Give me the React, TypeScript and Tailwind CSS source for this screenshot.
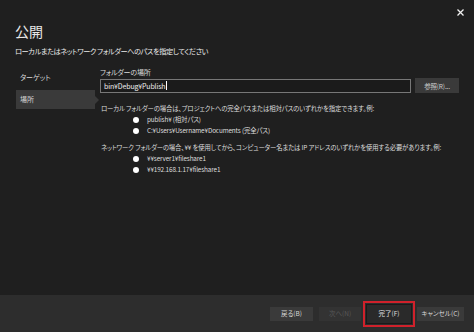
import React from "react";

const font = {
  fontFamily: '"Noto Sans CJK JP", "Noto Sans", sans-serif',
  fontFeatureSettings: '"palt"',
};

function Bullet({ children }: { children: React.ReactNode }) {
  return (
    <li className="flex items-center h-[11px]">
      <span className="ml-[33px] w-[6px] h-[6px] rounded-full bg-white" />
      <span className="ml-[8px]">{children}</span>
    </li>
  );
}

export default function App() {
  return (
    <div
      className="w-[474px] h-[332px] bg-[#1f1f1f] text-[#dcdcdc] flex flex-col overflow-hidden relative"
      style={font}
    >
      <button className="absolute right-[8px] top-[6px] w-[12px] h-[12px] flex items-center justify-center text-white">
        <svg width="7" height="7" viewBox="0 0 7 7">
          <path d="M0.5 0.5 L6.5 6.5 M6.5 0.5 L0.5 6.5" stroke="#f0f0f0" strokeWidth="1.3" />
        </svg>
      </button>

      <div className="flex-1 flex flex-col">
        <div className="pl-[15px] pt-[22px]">
          <h1 className="text-[14px] leading-[18px] text-[#e8e8e8] font-normal">公開</h1>
          <p className="mt-[6px] text-[7.2px] leading-[11px] tracking-[-0.4px] text-[#ececec]">
            ローカルまたはネットワーク フォルダーへのパスを指定してください
          </p>
        </div>

        <div className="flex mt-[12px]">
          <nav className="w-[100px] pl-[16px] pt-[1px] text-[7px] flex flex-col">
            <div className="h-[14px] pl-[4px] flex items-center text-[#d8d8d8]">ターゲット</div>
            <div className="relative mt-[6px] h-[19px] w-[79px] bg-[#3a3a3a] pl-[4px] flex items-center text-[#d8d8d8]">
              場所
              <span className="absolute right-[-4px] top-[6px] w-0 h-0 border-y-[4px] border-y-transparent border-l-[4px] border-l-[#3a3a3a]" />
            </div>
          </nav>

          <div className="flex-1 text-[6.4px] leading-[10px] tracking-[-0.15px] text-[#dcdcdc]">
            <div className="text-[7px] leading-[10px] mt-[-2px]">フォルダーの場所</div>
            <div className="flex items-center mt-[1px]">
              <div className="w-[311px] h-[14px] border border-[#777] bg-[#1b1b1b] flex items-center pl-[3px] text-[7px] text-[#eee]">
                bin¥Debug¥Publish
                <span className="ml-[1px] w-[1px] h-[9px] bg-white" />
              </div>
              <button className="ml-[4px] w-[44px] h-[15px] bg-[#3a3a3a] text-[6.5px] text-[#cfcfcf] flex items-center justify-center">
                参照(R)...
              </button>
            </div>

            <p className="mt-[11px] pl-[1px]">
              ローカル フォルダーの場合は、プロジェクトへの完全パスまたは相対パスのいずれかを指定できます。例:
            </p>
            <ul>
              <Bullet>publish¥ (相対パス)</Bullet>
              <Bullet>C:¥Users¥Username¥Documents (完全パス)</Bullet>
            </ul>

            <p className="mt-[7px] pl-[1px]">
              ネットワーク フォルダーの場合、¥¥ を使用してから、コンピューター名または IP アドレスのいずれかを使用する必要があります。例:
            </p>
            <ul>
              <Bullet>¥¥server1¥fileshare1</Bullet>
              <Bullet>¥¥192.168.1.17¥fileshare1</Bullet>
            </ul>
          </div>
        </div>
      </div>

      <footer className="h-[37px] bg-[#2d2d2d] flex items-center justify-end pr-[10px] text-[6.5px]">
        <button className="w-[43px] h-[14px] bg-[#3a3a3a] text-[#d8d8d8] flex items-center justify-center">
          戻る(B)
        </button>
        <button className="ml-[6px] w-[42px] h-[14px] bg-[#333333] text-[#5a5a5a] flex items-center justify-center">
          次へ(N)
        </button>
        <div className="ml-[2px] border-2 border-[#d0212b] p-[1px]">
          <button className="w-[46px] h-[20px] bg-[#2a2a2a] border border-[#1a1a1a] text-[#e0e0e0] flex items-center justify-center">
            完了(F)
          </button>
        </div>
        <button className="ml-[2px] w-[47px] h-[14px] bg-[#3a3a3a] text-[#d8d8d8] flex items-center justify-center">
          キャンセル(C)
        </button>
      </footer>
    </div>
  );
}
